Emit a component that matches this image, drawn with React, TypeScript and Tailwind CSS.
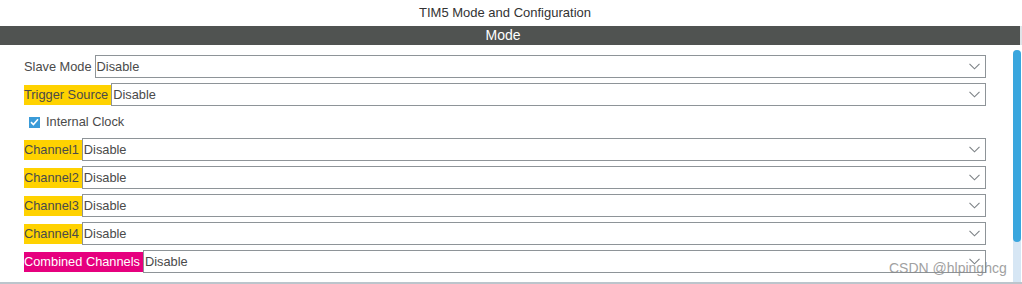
import React from "react";

type Row = { label: string; tone?: "yellow" | "pink" };

const rowsTop: Row[] = [{ label: "Slave Mode" }, { label: "Trigger Source", tone: "yellow" }];
const rowsBottom: Row[] = [
  { label: "Channel1", tone: "yellow" },
  { label: "Channel2", tone: "yellow" },
  { label: "Channel3", tone: "yellow" },
  { label: "Channel4", tone: "yellow" },
  { label: "Combined Channels", tone: "pink" },
];

function Chevron() {
  return (
    <svg width="11" height="7" viewBox="0 0 11 7" fill="none">
      <path d="M0.5 0.8 L5.5 5.8 L10.5 0.8" stroke="#7d8286" strokeWidth="1.1" />
    </svg>
  );
}

function SelectRow({ label, tone }: Row) {
  const toneClass =
    tone === "yellow"
      ? "bg-[#ffd200] text-[#4a4a4a]"
      : tone === "pink"
        ? "bg-[#e6007e] text-white"
        : "text-[#4a4a4a]";
  return (
    <div className="flex h-[23px] items-center">
      <span className={`flex h-[20px] items-center pr-[3px] whitespace-nowrap ${toneClass}`}>{label}</span>
      <div className="flex h-[23px] flex-1 items-center justify-between border border-[#8e9498] bg-white pl-[1px] pr-[5px] text-[#4a4a4a]">
        <span>Disable</span>
        <Chevron />
      </div>
    </div>
  );
}

export default function App() {
  return (
    <div className="relative h-[284px] w-[1022px] overflow-hidden bg-white font-['Liberation_Sans',Arial,sans-serif] text-[12.8px]">
      <div className="flex h-[26px] items-center justify-center pr-[12px] text-[13px] text-[#333]">
        TIM5 Mode and Configuration
      </div>
      <div className="flex">
        <div className="flex h-[19px] w-[1020px] items-center justify-center bg-[#505351] pr-[14px] text-[14px] text-white">
          Mode
        </div>
        <div className="w-[2px] bg-[#dfe4e8]" />
      </div>
      <div className="flex h-[237px]">
        <div className="flex flex-1 flex-col gap-[5px] pl-[24px] pr-[27px] pt-[10px]">
          {rowsTop.map((r) => (
            <SelectRow key={r.label} {...r} />
          ))}
          <div className="flex h-[22px] items-center gap-[6px] pl-[5px] text-[#4a4a4a]">
            <span className="flex h-[11px] w-[11px] items-center justify-center bg-[#3a9bd8]">
              <svg width="9" height="8" viewBox="0 0 9 8" fill="none">
                <path d="M1 4.2 L3.4 6.5 L8 1.3" stroke="white" strokeWidth="1.6" />
              </svg>
            </span>
            <span>Internal Clock</span>
          </div>
          {rowsBottom.map((r) => (
            <SelectRow key={r.label} {...r} />
          ))}
        </div>
        <div className="flex w-[8px] flex-col pt-[5px]">
          <div className="flex flex-1 flex-col rounded-t-[4px] bg-[#d6e6f4]">
            <div className="h-[192px] rounded-[4px] bg-[#39a6de]" />
          </div>
        </div>
        <div className="w-[1px]" />
      </div>
      <div className="h-[2px] bg-[#bcc5cc]" />
      <span className="pointer-events-none absolute left-[889px] top-[258px] text-[14px] text-[#8a8a8a] opacity-80">
        CSDN @hlpinghcg
      </span>
    </div>
  );
}
